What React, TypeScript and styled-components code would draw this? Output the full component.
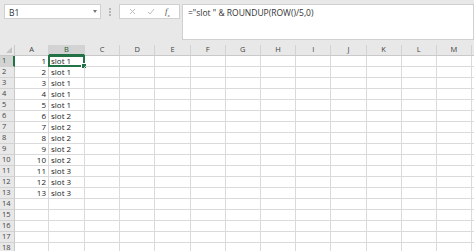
import React from "react";
import styled, { createGlobalStyle } from "styled-components";

const Global = createGlobalStyle`
  html, body { margin: 0; padding: 0; background: #ffffff; overflow: hidden; }
  body { font-family: "Open Sans", "Noto Sans", "Liberation Sans", sans-serif; }
`;

const Page = styled.div`
  width: 474px;
  height: 251px;
  display: flex;
  flex-direction: column;
  overflow: hidden;
`;

const Toolbar = styled.div`
  height: 45px;
  flex: none;
  background: #e8e8e8;
  display: flex;
  align-items: flex-start;
  padding: 4px 0 0 4px;
  box-sizing: border-box;
`;

const Box = styled.div<{ $w?: number; $h?: number }>`
  background: #ffffff;
  border: 1px solid #d0d0d0;
  box-sizing: border-box;
  height: ${(p) => p.$h ?? 15}px;
  ${(p) => (p.$w ? `width: ${p.$w}px;` : "flex: 1;")}
  display: flex;
  align-items: flex-start;
  position: relative;
`;

const NameText = styled.span`
  font-size: 8.5px;
  color: #333;
  padding: 2px 0 0 4px;
  flex: 1;
`;

const Caret = styled.span`
  width: 0;
  height: 0;
  border-left: 2.5px solid transparent;
  border-right: 2.5px solid transparent;
  border-top: 3px solid #777;
  margin: 5px 3px 0 0;
`;

const Dots = styled.div`
  width: 18px;
  display: flex;
  flex-direction: column;
  align-items: center;
  gap: 1.5px;
  padding-top: 4px;
  span {
    width: 1.5px;
    height: 1.5px;
    background: #b5b5b5;
  }
`;

const FnBox = styled(Box)`
  justify-content: space-around;
  align-items: center;
  padding: 0 4px;
  margin-right: 2px;
  color: #b0b0b0;
`;

const FxText = styled.span`
  font-family: "Liberation Serif", serif;
  font-style: italic;
  font-size: 9px;
  color: #555;
`;

const FxSub = styled.sub`
  font-size: 5px;
`;

const FormulaText = styled.span`
  font-size: 8.5px;
  color: #333;
  padding: 2px 0 0 5px;
  white-space: nowrap;
`;

const COLS = ["A", "B", "C", "D", "E", "F", "G", "H", "I", "J", "K", "L", "M", ""];

const Grid = styled.div`
  display: grid;
  grid-template-columns: 15px 34px 36px repeat(11, 35.2px) 10px;
  grid-auto-rows: 11px;
  grid-template-rows: 11px;
  font-size: 8px;
`;

const Corner = styled.div`
  background: #e8e8e8;
  border-right: 1px solid #c9c9c9;
  border-bottom: 1px solid #c9c9c9;
  box-sizing: border-box;
  position: relative;
  &::after {
    content: "";
    position: absolute;
    right: 2px;
    bottom: 2px;
    width: 0;
    height: 0;
    border-left: 6px solid transparent;
    border-bottom: 6px solid #c4c4c4;
  }
`;

const ColHead = styled.div<{ $sel?: boolean }>`
  background: ${(p) => (p.$sel ? "#d3d3d3" : "#e8e8e8")};
  border-right: 1px solid #d2d2d2;
  border-bottom: ${(p) => (p.$sel ? "2px solid #217346" : "1px solid #c9c9c9")};
  box-sizing: border-box;
  display: flex;
  align-items: center;
  justify-content: center;
  font-size: 7.5px;
  color: ${(p) => (p.$sel ? "#1e5e3a" : "#444")};
  line-height: 1;
`;

const RowHead = styled.div<{ $sel?: boolean }>`
  background: ${(p) => (p.$sel ? "#d3d3d3" : "#e8e8e8")};
  border-right: ${(p) => (p.$sel ? "2px solid #217346" : "1px solid #c9c9c9")};
  border-bottom: 1px solid #d2d2d2;
  box-sizing: border-box;
  display: flex;
  align-items: center;
  padding-left: 2px;
  font-size: 7.5px;
  color: ${(p) => (p.$sel ? "#1e5e3a" : "#444")};
  line-height: 1;
`;

const Cell = styled.div<{ $align?: "left" | "right" }>`
  border-right: 1px solid #dadada;
  border-bottom: 1px solid #dadada;
  box-sizing: border-box;
  display: flex;
  align-items: center;
  justify-content: ${(p) => (p.$align === "right" ? "flex-end" : "flex-start")};
  padding: 0 2px;
  color: #222;
  white-space: nowrap;
  line-height: 1;
  position: relative;
`;

const Selected = styled.div`
  position: absolute;
  left: -1px;
  top: -1px;
  right: -1px;
  bottom: -1px;
  border: 2px solid #217346;
  box-sizing: border-box;
  &::after {
    content: "";
    position: absolute;
    right: -4px;
    bottom: -4px;
    width: 4px;
    height: 4px;
    background: #217346;
    border: 1px solid #fff;
  }
`;

const SelText = styled.span`
  position: relative;
  z-index: 1;
`;

const XIcon = () => (
  <svg width="7" height="7" viewBox="0 0 7 7">
    <path d="M1 1L6 6M6 1L1 6" stroke="#b8b8b8" strokeWidth="0.9" />
  </svg>
);

const CheckIcon = () => (
  <svg width="8" height="7" viewBox="0 0 8 7">
    <path d="M1 4L3 6L7 1" stroke="#b8b8b8" strokeWidth="0.9" fill="none" />
  </svg>
);

const ROWS = 18;

function slot(n: number) {
  return "slot " + Math.ceil(n / 5);
}

export default function App() {
  const rows: React.ReactNode[] = [];
  for (let r = 1; r <= ROWS; r++) {
    rows.push(
      <RowHead key={`h${r}`} $sel={r === 1}>
        {r}
      </RowHead>
    );
    COLS.forEach((c, i) => {
      let content: React.ReactNode = null;
      let align: "left" | "right" = "left";
      if (r <= 13 && c === "A") {
        content = r;
        align = "right";
      } else if (r <= 13 && c === "B") {
        content = slot(r);
      }
      rows.push(
        <Cell key={`${i}-${r}`} $align={align}>
          {r === 1 && c === "B" ? (
            <>
              <Selected />
              <SelText>{content}</SelText>
            </>
          ) : (
            content
          )}
        </Cell>
      );
    });
  }

  return (
    <Page>
      <Global />
      <Toolbar>
        <Box $w={97}>
          <NameText>B1</NameText>
          <Caret />
        </Box>
        <Dots>
          <span />
          <span />
          <span />
        </Dots>
        <FnBox $w={61}>
          <XIcon />
          <CheckIcon />
          <FxText>
            f<FxSub>x</FxSub>
          </FxText>
        </FnBox>
        <Box $h={36}>
          <FormulaText>="slot " &amp; ROUNDUP(ROW()/5,0)</FormulaText>
        </Box>
      </Toolbar>
      <Grid>
        <Corner />
        {COLS.map((c, i) => (
          <ColHead key={`c${i}`} $sel={c === "B"}>
            {c}
          </ColHead>
        ))}
        {rows}
      </Grid>
    </Page>
  );
}
